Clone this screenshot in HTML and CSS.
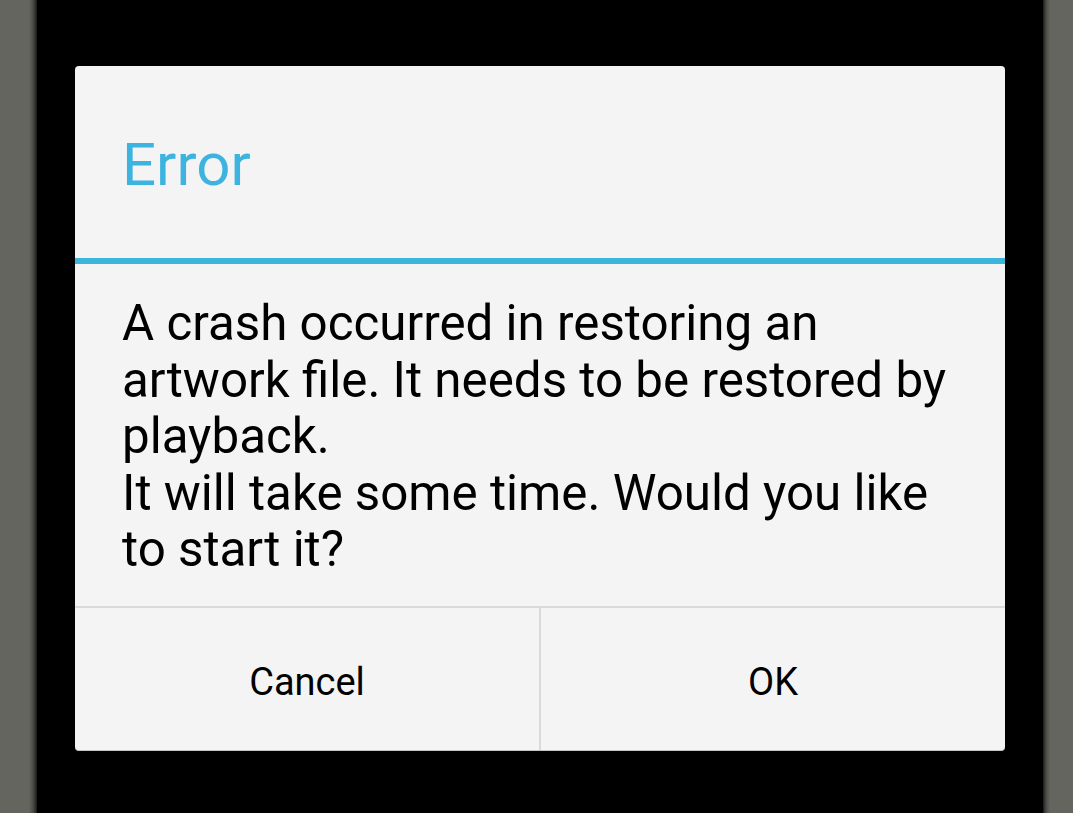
FILE: index.html
```html
<!DOCTYPE html>
<html>
<head>
<meta charset="utf-8">
<link rel="stylesheet" href="styles.css">
</head>
<body>
<div class="screen">
  <div class="edge edge-left"></div>
  <div class="stage">
    <div class="dialog">
      <div class="title">Error</div>
      <div class="title-rule"></div>
      <div class="message">A crash occurred in restoring an<br>artwork file. It needs to be restored by<br>playback.<br>It will take some time. Would you like<br>to start it?</div>
      <div class="buttons">
        <div class="btn">Cancel</div>
        <div class="btn btn-right">OK</div>
      </div>
    </div>
  </div>
  <div class="edge edge-right"></div>
</div>
</body>
</html>
```

FILE: styles.css
```css
html, body {
  margin: 0;
  padding: 0;
  background: #000;
}
.screen {
  display: flex;
  width: 1073px;
  height: 813px;
  overflow: hidden;
}
.edge {
  background: #64655e;
}
.edge-left {
  width: 37px;
  background: linear-gradient(to right, #64655e 0, #64655e 29px, #4a4b45 33px, #1a1a18 37px);
}
.edge-right {
  width: 30px;
  background: linear-gradient(to left, #64655e 0, #64655e 23px, #4a4b45 27px, #1a1a18 30px);
}
.stage {
  flex: 1;
  background: #000;
  padding: 66px 38px 0 38px;
}
.dialog {
  background: #f4f4f4;
  border-radius: 4px;
  border-bottom: 1px solid #c4c4c4;
  font-family: Roboto, "Noto Sans", sans-serif;
  overflow: hidden;
}
.title {
  height: 192px;
  box-sizing: border-box;
  padding: 64px 47px 0 47px;
  font-size: 60px;
  line-height: 70px;
  color: #3db4df;
}
.title-rule {
  height: 6px;
  background: #3db4dc;
}
.message {
  padding: 31px 47px 28px 47px;
  font-size: 49.3px;
  line-height: 56.5px;
  color: #000;
}
.buttons {
  display: flex;
  border-top: 2px solid #dadada;
  height: 142px;
}
.btn {
  flex: 1;
  text-align: center;
  box-sizing: border-box;
  padding-top: 52px;
  font-size: 38px;
  line-height: 44px;
  color: #000;
}
.btn-right {
  border-left: 2px solid #dadada;
}
```
